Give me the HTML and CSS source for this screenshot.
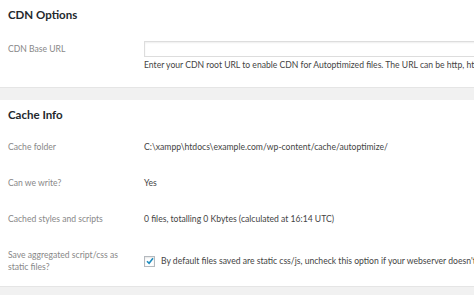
FILE: index.html
```html
<!DOCTYPE html>
<html>
<head>
<meta charset="UTF-8">
<title>Autoptimize settings</title>
<link rel="stylesheet" href="styles.css">
</head>
<body>

<div class="panel cdn">
	<h2>CDN Options</h2>
	<div class="row first">
		<div class="label">CDN Base URL</div>
		<div class="field">
			<input type="text" class="url" value="">
			<p class="desc">Enter your CDN root URL to enable CDN for Autoptimized files. The URL can be http, https or protocol-relative. This is not needed for Cloudflare.</p>
		</div>
	</div>
</div>

<div class="panel cache">
	<h2>Cache Info</h2>
	<div class="row">
		<div class="label">Cache folder</div>
		<div class="field">C:\xampp\htdocs\example.com/wp-content/cache/autoptimize/</div>
	</div>
	<div class="row">
		<div class="label">Can we write?</div>
		<div class="field">Yes</div>
	</div>
	<div class="row">
		<div class="label">Cached styles and scripts</div>
		<div class="field">0 files, totalling 0 Kbytes (calculated at 16:14 UTC)</div>
	</div>
	<div class="row last">
		<div class="label two">Save aggregated script/css as static files?</div>
		<div class="field check">
			<span class="box"><svg width="8" height="8" viewBox="0 0 8 8"><path d="M1 4.2 L3.1 6.3 L7 1.3" fill="none" stroke="#1e8cbe" stroke-width="1.6"/></svg></span>
			By default files saved are static css/js, uncheck this option if your webserver doesn't properly handle the compression.
		</div>
	</div>
</div>

</body>
</html>
```

FILE: styles.css
```css
body {
	margin: 0;
	background-color: #f1f1f1;
	font-family: Lato, "Liberation Sans", sans-serif;
	font-size: 8.6px;
	color: #444;
	overflow: hidden;
}
.panel {
	background-color: #fff;
	border-bottom: 1px solid #e5e5e5;
	white-space: nowrap;
	overflow: hidden;
}
.cdn {
	height: 87px;
}
.cache {
	margin-top: 12px;
	height: 186px;
}
h2 {
	margin: 0;
	padding: 6px 8px 0 8px;
	font-size: 11.5px;
	line-height: 18px;
	font-weight: 700;
	color: #23282d;
}
.row {
	display: flex;
	padding: 10px 0;
	line-height: 16px;
}
.row.first {
	padding-top: 17px;
}
.cache h2 {
	margin-bottom: 5px;
}
.row.last {
	padding-top: 12px;
}
.label {
	width: 144px;
	flex: none;
	padding-left: 8px;
	box-sizing: border-box;
	color: #888;
}
.label.two {
	white-space: normal;
	line-height: 12px;
	padding-right: 14px;
}
.field {
	flex: 1;
}
.url {
	display: block;
	width: 340px;
	height: 16px;
	margin: 0;
	padding: 0 4px;
	border: 1px solid #ddd;
	box-shadow: inset 0 1px 2px rgba(0,0,0,.07);
	box-sizing: border-box;
	background: #fff;
}
.desc {
	margin: 0;
	line-height: 16px;
}
.check {
	display: flex;
	align-items: center;
	height: 24px;
	gap: 6px;
}
.box {
	width: 9px;
	height: 9px;
	border: 1px solid #b4b9be;
	box-shadow: inset 0 1px 2px rgba(0,0,0,.1);
	display: flex;
	align-items: center;
	justify-content: center;
	flex: none;
}
```
